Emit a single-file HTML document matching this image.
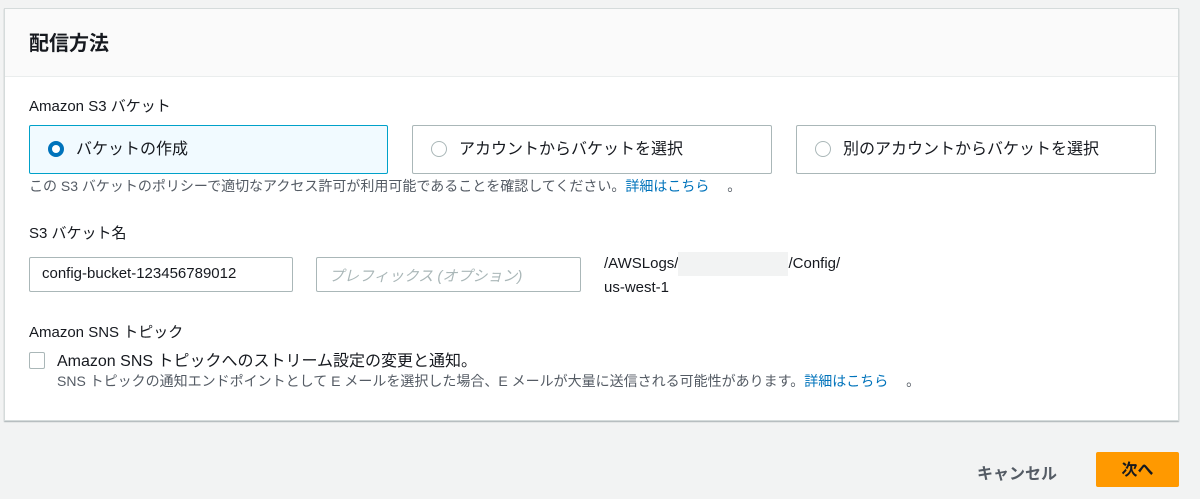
<!DOCTYPE html>
<html><head><meta charset="utf-8"><style>
*{box-sizing:border-box;margin:0;padding:0}
body{width:1200px;height:499px;background:#f2f3f3;font-family:"Liberation Sans","Noto Sans CJK JP",sans-serif;color:#16191f;position:relative;overflow:hidden}
.a{position:absolute;white-space:nowrap}
.panel{position:absolute;left:4px;top:8px;width:1175px;height:413px;background:#fff;border:1px solid #d5dbdb;box-shadow:0 1px 1px rgba(0,28,36,.3)}
.hdr{position:absolute;left:0;top:0;right:0;height:68px;background:#fafafa;border-bottom:1px solid #eaeded}
.rb{position:absolute;top:116px;height:49px;border:1px solid #aab7b8;border-radius:2px;background:#fff;font-size:16px}
.rb .c{position:absolute;left:18px;top:15px;width:16px;height:16px;border-radius:50%;border:1px solid #aab7b8}
.rb span{position:absolute;left:46px;top:9px}
.inp{position:absolute;top:248px;height:35px;border:1px solid #aab7b8;border-radius:2px;font-size:15px;padding:7px 12px}
.s{font-size:14px;color:#545b64}
a{color:#0073bb;text-decoration:none}
</style></head><body>
<div class="panel">
<div class="hdr"><div class="a" style="left:24px;top:18px;font-size:20px;font-weight:bold">配信方法</div></div>
<div class="a" style="left:24px;top:86px;font-size:15px">Amazon S3 バケット</div>
<div class="rb" style="left:24px;width:359px;border-color:#00a1c9;background:#f1faff"><div class="c" style="border:4px solid #0073bb;background:#fff"></div><span>バケットの作成</span></div>
<div class="rb" style="left:407px;width:360px"><div class="c"></div><span>アカウントからバケットを選択</span></div>
<div class="rb" style="left:791px;width:360px"><div class="c"></div><span>別のアカウントからバケットを選択</span></div>
<div class="a s" style="left:24px;top:167px">この S3 バケットのポリシーで適切なアクセス許可が利用可能であることを確認してください。<a>詳細はこちら</a>　 。</div>
<div class="a" style="left:24px;top:213px;font-size:15px">S3 バケット名</div>
<div class="inp" style="left:24px;width:264px">config-bucket-123456789012</div>
<div class="inp" style="left:311px;width:265px;color:#aab7b8;font-style:italic">プレフィックス (オプション)</div>
<div class="a" style="left:599px;top:243px;font-size:15px;line-height:24px">/AWSLogs/<span style="display:inline-block;width:110px;height:24px;background:#f2f3f3;vertical-align:top"></span>/Config/<br>us-west-1</div>
<div class="a" style="left:24px;top:312px;font-size:15px">Amazon SNS トピック</div>
<div class="a" style="left:24px;top:343px;width:16px;height:17px;border:1px solid #aab7b8;border-radius:2px"></div>
<div class="a" style="left:52px;top:338px;font-size:16px">Amazon SNS トピックへのストリーム設定の変更と通知。</div>
<div class="a s" style="left:52px;top:362px">SNS トピックの通知エンドポイントとして E メールを選択した場合、E メールが大量に送信される可能性があります。<a>詳細はこちら</a>　 。</div>
</div>
<div class="a" style="left:977px;top:460px;font-size:16px;font-weight:bold;color:#545b64">キャンセル</div>
<div class="a" style="left:1096px;top:452px;width:83px;height:35px;background:#ff9900;border-radius:2px;font-size:16px;font-weight:bold;text-align:center;line-height:37px">次へ</div>
</body></html>
